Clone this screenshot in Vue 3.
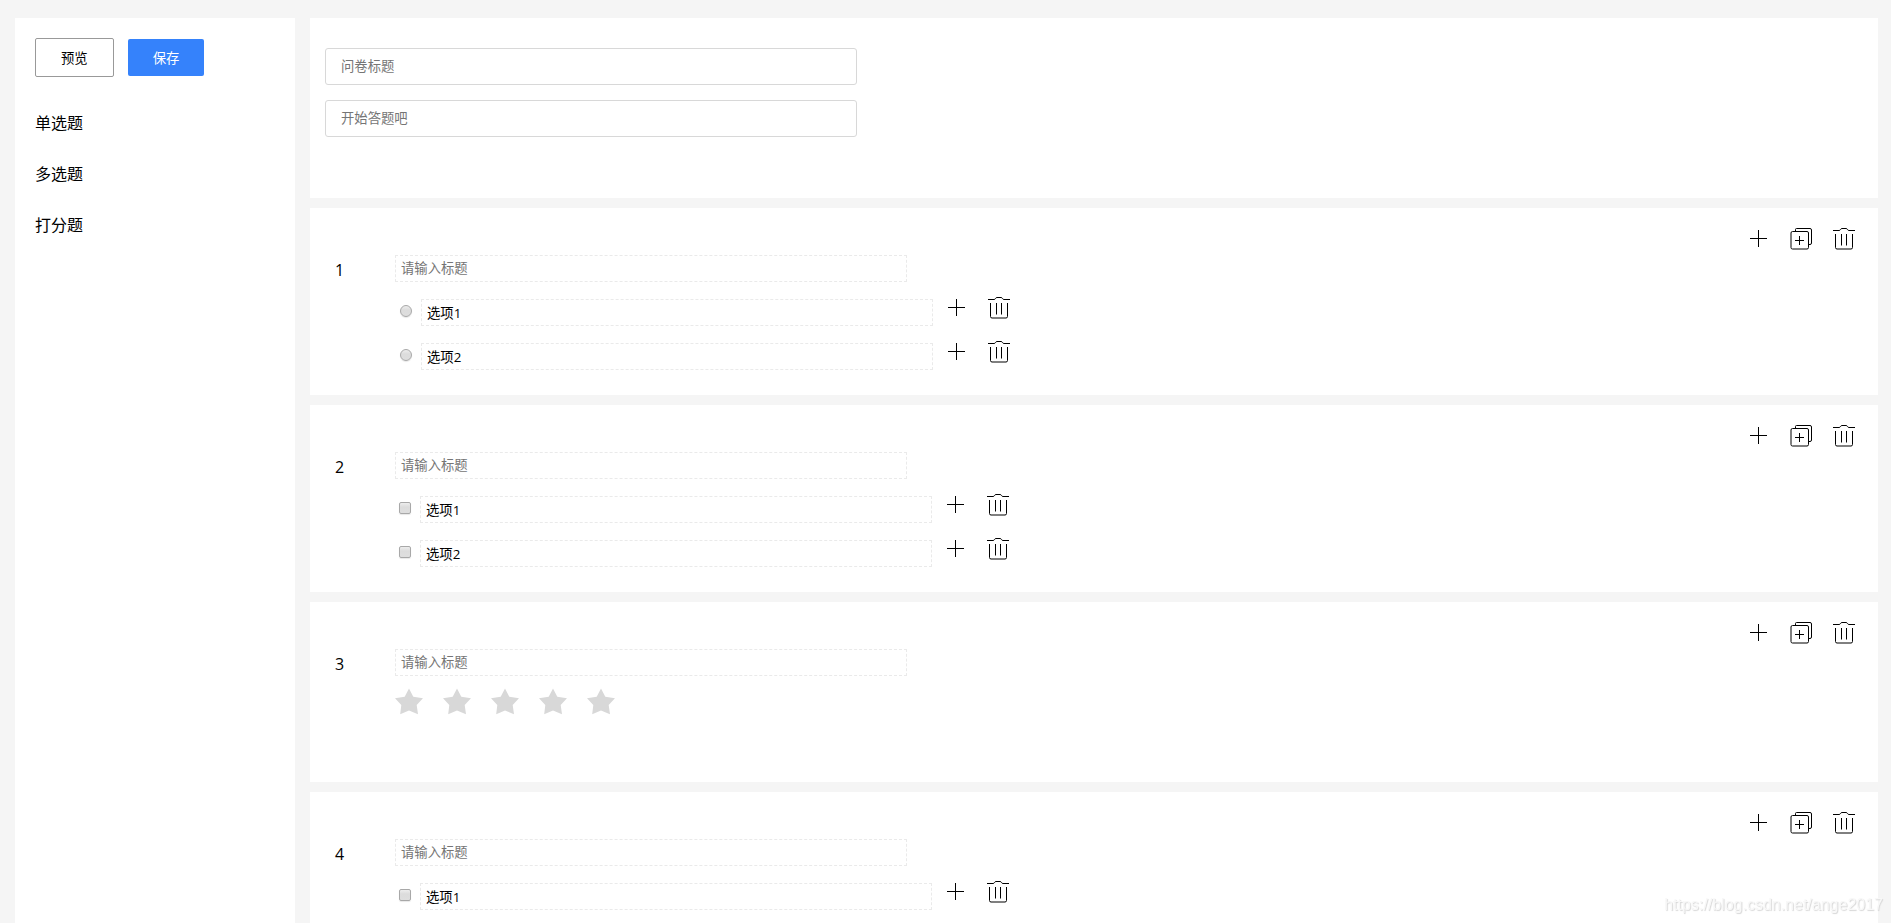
<script setup>
import { ref } from 'vue'

const types = ['单选题', '多选题', '打分题']

const surveyTitle = ref('')
const surveyIntro = ref('')

const questions = ref([
  { id: 1, type: 'radio', title: '', options: ['选项1', '选项2'] },
  { id: 2, type: 'checkbox', title: '', options: ['选项1', '选项2'] },
  { id: 3, type: 'score', title: '', options: [] },
  { id: 4, type: 'checkbox', title: '', options: ['选项1', '选项2'] },
])

const icons = {
  add: 'M11.5 3V20M3 11.5H20',
  copy: 'M2.5 4.5H17Q18.5 4.5 18.5 6V20.5Q18.5 22 17 22H2.5Q1 22 1 20.5V6Q1 4.5 2.5 4.5ZM5.5 4V2.5Q5.5 1.5 6.5 1.5H20Q21.5 1.5 21.5 3V16Q21.5 17.5 20 17.5H19M9.5 9V18M5 13.5H14',
  remove: 'M0 3.5H6Q7 3.5 7.5 2.5Q8 1.5 9 1.5H13Q14 1.5 14.5 2.5Q15 3.5 16 3.5H22M2.5 7V20.5Q2.5 22 4 22H18Q19.5 22 19.5 20.5V7M8.5 7V18.5M13.5 7V18.5',
}

const cardTools = [
  { name: 'add', label: '添加题目' },
  { name: 'copy', label: '复制题目' },
  { name: 'remove', label: '删除题目' },
]
const optionTools = [
  { name: 'add', label: '添加选项' },
  { name: 'remove', label: '删除选项' },
]
</script>

<template>
  <div class="page">
    <aside class="sidebar">
      <div class="actions">
        <button type="button" class="btn preview">预览</button>
        <button type="button" class="btn save">保存</button>
      </div>
      <ul class="types">
        <li v-for="t in types" :key="t">
          <button type="button" class="type">{{ t }}</button>
        </li>
      </ul>
    </aside>

    <main class="editor">
      <section class="card intro">
        <input v-model="surveyTitle" class="field" type="text" placeholder="问卷标题" aria-label="问卷标题" />
        <input v-model="surveyIntro" class="field" type="text" placeholder="开始答题吧" aria-label="开始答题吧" />
      </section>

      <section v-for="(q, n) in questions" :key="q.id" class="card question">
        <div class="tools card-tools">
          <button v-for="t in cardTools" :key="t.name" type="button" class="tool" :aria-label="t.label">
            <svg viewBox="0 0 23 23"><path :d="icons[t.name]" /></svg>
          </button>
        </div>
        <div class="body">
          <span class="number">{{ n + 1 }}</span>
          <div class="content">
            <input v-model="q.title" class="line title" type="text" placeholder="请输入标题" aria-label="请输入标题" />
            <div v-if="q.type === 'score'" class="stars">
              <button v-for="s in 5" :key="s" type="button" class="star" :aria-label="s + '分'">
                <svg viewBox="0 0 28 27">
                  <path d="M14 0.5L18.3 8.8L28 10.2L21.7 17L23 26.2L14 22.6L5.2 26.2L6.3 17L0 10.2L9.7 8.8Z" />
                </svg>
              </button>
            </div>
            <div v-else class="options">
              <div v-for="(o, i) in q.options" :key="i" class="option">
                <input :type="q.type" :name="'q' + q.id" class="mark" :class="q.type" :aria-label="o" />
                <input v-model="q.options[i]" class="line" type="text" :aria-label="'选项内容' + (i + 1)" />
                <div class="tools">
                  <button v-for="t in optionTools" :key="t.name" type="button" class="tool" :aria-label="t.label">
                    <svg viewBox="0 0 23 23"><path :d="icons[t.name]" /></svg>
                  </button>
                </div>
              </div>
            </div>
          </div>
        </div>
      </section>
    </main>

    <div class="watermark">https://blog.csdn.net/ange2017</div>
  </div>
</template>

<style>
body {
  background: #f5f5f5;
}
</style>

<style scoped>
.page {
  box-sizing: border-box;
  height: 100vh;
  padding: 18px 13px 0 15px;
  display: flex;
  gap: 15px;
  overflow: hidden;
  color: #000;
  font-family: "Open Sans", "Noto Sans CJK SC", sans-serif;
  font-size: 16px;
}
button,
input {
  box-sizing: border-box;
  margin: 0;
  font-family: inherit;
  color: inherit;
}
button {
  padding: 0;
  border: 0;
  background: none;
  cursor: pointer;
}
svg {
  display: block;
}
.sidebar {
  box-sizing: border-box;
  flex: 0 0 280px;
  padding: 20px;
  background: #fff;
}
.actions {
  display: flex;
  align-items: center;
  gap: 14px;
}
.btn {
  height: 37px;
  padding: 0 25px;
  border-radius: 2px;
}
.preview {
  height: 39px;
  border: 1px solid #999;
}
.save {
  background: #3582fb;
  color: #fff;
}
.types {
  margin: 19px 0 0;
  padding: 0;
  list-style: none;
}
.type {
  display: block;
  height: 51px;
  font-size: 16px;
}
.editor {
  flex: 1;
  min-width: 0;
  display: flex;
  flex-direction: column;
  gap: 10px;
  overflow-y: auto;
  scrollbar-width: none;
}
.card {
  box-sizing: border-box;
  flex: none;
  min-height: 180px;
  background: #fff;
}
.intro {
  padding: 30px 15px;
  display: flex;
  flex-direction: column;
  gap: 15px;
}
.field {
  width: 532px;
  height: 37px;
  padding: 0 15px 2px;
  border: 1px solid #d8d8d8;
  border-radius: 3px;
  background: #fff;
}
input::placeholder {
  color: #757575;
}
.question {
  padding: 19px 22px 11px 25px;
}
.tools {
  display: flex;
  gap: 20px;
}
.card-tools {
  justify-content: flex-end;
}
.tool {
  width: 23px;
  height: 23px;
}
.tool path {
  fill: none;
  stroke: #000;
  stroke-width: 1;
}
.body {
  display: flex;
  margin-top: 5px;
}
.number {
  width: 60px;
  line-height: 30px;
}
.line {
  display: block;
  width: 512px;
  height: 27px;
  padding: 0 5px;
  border: 1px dashed #eaeaea;
  background: #fff;
}
.title {
  padding-bottom: 2px;
}
.options {
  margin-top: 14px;
}
.option {
  display: flex;
  align-items: flex-start;
  height: 44px;
}
.option .line {
  margin: 3px 12px 0 9px;
}
.mark {
  appearance: none;
  flex: none;
  width: 12px;
  height: 12px;
  margin: 9px 0 0 4px;
  border: 1px solid #a8a8a8;
  border-radius: 2px;
  background: linear-gradient(#ededed, #dcdcdc 40%, #dedede);
  box-shadow: 0 1px 1px #e8e8e8;
}
.mark.radio {
  margin-left: 5px;
  border-radius: 50%;
}
.mark:checked {
  background: #3582fb;
}
.stars {
  display: flex;
  gap: 20px;
  margin-top: 12px;
}
.star {
  width: 28px;
  height: 27px;
}
.star path {
  fill: #d8d8d8;
}
.watermark {
  position: fixed;
  right: 8px;
  bottom: 8px;
  font-family: "Liberation Sans", Arial, sans-serif;
  font-size: 16px;
  line-height: 20px;
  color: #f8f8f8;
  text-shadow: 1px 1px 1px #d6d6d6;
  pointer-events: none;
}
</style>
